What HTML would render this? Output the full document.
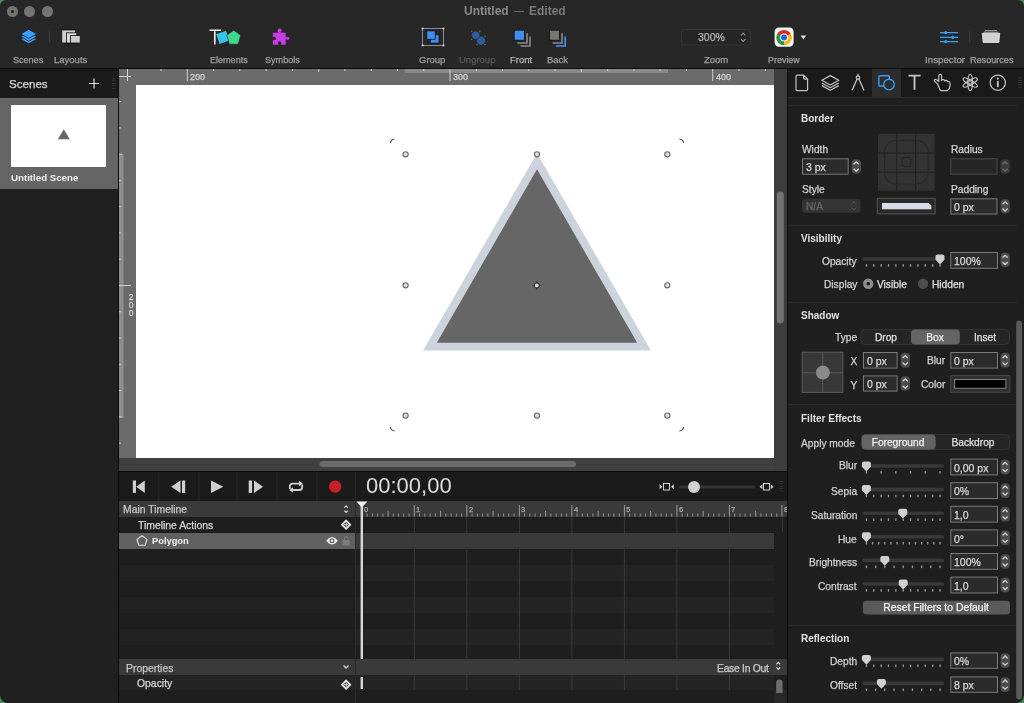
<!DOCTYPE html>
<html><head><meta charset="utf-8">
<style>
*{margin:0;padding:0;box-sizing:border-box}
html,body{width:1024px;height:703px;overflow:hidden;background:#272727;font-family:"Liberation Sans",sans-serif;position:relative}
.a{position:absolute}
.t{position:absolute;white-space:nowrap;line-height:1;-webkit-text-stroke:0.25px currentColor}
.t[style*="bold"]{-webkit-text-stroke:0}
.t{will-change:transform}
svg{position:absolute;overflow:visible}
</style></head><body>
<!-- ===== TOOLBAR ===== -->
<div class="a" style="left:0;top:0;width:1024px;height:68px;background:#272727"></div>
<div class="a" style="left:7px;top:6px;width:11px;height:11px;border-radius:50%;background:#747474"></div>
<div class="a" style="left:11px;top:10px;width:3px;height:3px;border-radius:50%;background:#1d1d1d"></div>
<div class="a" style="left:24px;top:6px;width:11px;height:11px;border-radius:50%;background:#747474"></div>
<div class="a" style="left:42px;top:6px;width:11px;height:11px;border-radius:50%;background:#747474"></div>
<div class="t" style="left:464px;top:5px;font-size:12px;font-weight:bold;color:#8a8a8a">Untitled</div>
<div class="a" style="left:514px;top:11px;width:10px;height:1px;background:#6a6a6a"></div>
<div class="t" style="left:529px;top:5px;font-size:12px;font-weight:bold;color:#7a7a7a">Edited</div>


<!-- toolbar icons -->
<svg style="left:0;top:0" width="1024" height="68" viewBox="0 0 1024 68">
 <!-- scenes layers -->
 <path d="M28.8 34.8 L36.9 39.3 L28.8 43.8 L20.7 39.3 Z" fill="#3aa0ff" stroke="#1b1b1b" stroke-width="0.8" stroke-linejoin="round"/>
 <path d="M28.8 32.2 L36.9 36.7 L28.8 41.2 L20.7 36.7 Z" fill="#3aa0ff" stroke="#1b1b1b" stroke-width="0.8" stroke-linejoin="round"/>
 <path d="M28.8 29.4 L36.9 33.9 L28.8 38.4 L20.7 33.9 Z" fill="#3aa0ff" stroke="#1b1b1b" stroke-width="0.8" stroke-linejoin="round"/>
 <rect x="49" y="30.5" width="1" height="12" fill="#3a3a3a"/>
 <!-- layouts -->
 <rect x="61.8" y="30" width="13.6" height="13" fill="#cfcfcf" stroke="#111" stroke-width="0.8"/>
 <rect x="66.4" y="32.8" width="10.4" height="10.2" fill="#d6d6d6" stroke="#111" stroke-width="0.8"/>
 <rect x="70.6" y="35.6" width="9.6" height="7.4" fill="#cdcdcd" stroke="#111" stroke-width="0.8"/>
 <!-- elements -->
 <path d="M209.5 30.3 H221 M214.8 30.3 V44.5" stroke="#f2f2f2" stroke-width="1.6" fill="none"/>
 <g transform="rotate(-20 222.8 37.3)"><rect x="217.6" y="32.2" width="10.4" height="10.4" fill="#35c3ea"/></g>
 <path d="M233.8 30.3 L240.6 35.2 L238.2 44.2 L229.3 44.2 L226.8 35.2 Z" fill="#3fd88c" stroke="#272727" stroke-width="0.6"/>
 <!-- symbols puzzle -->
 <rect x="272.85" y="32.7" width="12.8" height="12" fill="#c83ce8"/>
 <rect x="278.7" y="31" width="1.8" height="2.5" fill="#c83ce8"/>
 <circle cx="279.6" cy="30.6" r="2" fill="#c83ce8"/>
 <rect x="285" y="37.4" width="2.2" height="1.6" fill="#c83ce8"/>
 <circle cx="287.8" cy="38.3" r="1.6" fill="#c83ce8"/>
 <circle cx="274.3" cy="38.4" r="1.7" fill="#272727"/>
 <rect x="272" y="37.4" width="2.4" height="2" fill="#272727"/>
 <circle cx="279.7" cy="43" r="1.7" fill="#272727"/>
 <rect x="278.7" y="43" width="2" height="2" fill="#272727"/>
 <!-- group -->
 <rect x="422.5" y="28.5" width="21" height="17" fill="none" stroke="#8c8c8c" stroke-width="1"/>
 <circle cx="422.6" cy="28.6" r="1.1" fill="#d0d0d0"/><circle cx="443.4" cy="28.6" r="1.1" fill="#d0d0d0"/>
 <circle cx="422.6" cy="45.4" r="1.1" fill="#d0d0d0"/><circle cx="443.4" cy="45.4" r="1.1" fill="#d0d0d0"/>
 <rect x="430.3" y="34.8" width="8.7" height="8.3" fill="#3d8ff6" stroke="#111" stroke-width="0.8"/>
 <rect x="426.8" y="30.9" width="8.4" height="8.4" fill="#3d8ff6" stroke="#111" stroke-width="0.8"/>
 <!-- ungroup -->
 <circle cx="481" cy="40.6" r="4.2" fill="#2d5c9e"/>
 <circle cx="475.8" cy="35.2" r="4.2" fill="#2d5c9e" stroke="#272727" stroke-width="0.7"/>
 <g fill="#6a6a6a"><circle cx="471.6" cy="31.2" r="0.8"/><circle cx="479.8" cy="31.2" r="0.8"/><circle cx="471.6" cy="39.2" r="0.8"/><circle cx="479.6" cy="39.2" r="0.8"/><circle cx="485" cy="36.2" r="0.8"/><circle cx="477" cy="44.6" r="0.8"/><circle cx="485" cy="44.6" r="0.8"/></g>
 <!-- front -->
 <path d="M520.6 46 H530 V36.4" fill="none" stroke="#8a8a8a" stroke-width="1.6"/>
 <path d="M517.4 43 H527 V33.3" fill="none" stroke="#8a8a8a" stroke-width="1.6"/>
 <rect x="514.2" y="30.2" width="10.2" height="10" fill="#3d8ff6" stroke="#111" stroke-width="0.8"/>
 <!-- back -->
 <path d="M555.8 46 H565.2 V36.4" fill="none" stroke="#3d9bff" stroke-width="1.6"/>
 <path d="M552.6 43 H562 V33.3" fill="none" stroke="#8a8a8a" stroke-width="1.6"/>
 <rect x="549.6" y="30.2" width="10" height="10" fill="#757575" stroke="#111" stroke-width="0.8"/>
 <!-- zoom box -->
 <rect x="681.5" y="29.5" width="69" height="15.5" rx="3" fill="#262626" stroke="#353535" stroke-width="1"/>
 <path d="M741 35.4 L743.2 33.2 L745.4 35.4 M741 39.2 L743.2 41.4 L745.4 39.2" fill="none" stroke="#9a9a9a" stroke-width="1.1"/>
 <!-- chrome -->
 <rect x="774.6" y="27.6" width="19" height="19.2" rx="4.2" fill="#f6f6f6"/>
 <circle cx="784" cy="37.4" r="7.5" fill="#dd2a1e"/>
 <path d="M784 37.4 L777.5 33.65 A7.5 7.5 0 0 0 784 44.9 Z" fill="#1f9a3e"/>
 <path d="M784 37.4 L784 44.9 A7.5 7.5 0 0 0 790.5 33.65 Z" fill="#f9bc14"/>
 <circle cx="784" cy="37.4" r="3.9" fill="#fff"/>
 <circle cx="784" cy="37.4" r="3" fill="#1d63e6"/>
 <path d="M800.6 35.6 H806.2 L803.4 39.6 Z" fill="#dcdcdc"/>
 <!-- inspector -->
 <g stroke="#3aa0ff" stroke-width="1.3"><path d="M940 32.6 H958 M940 37.3 H958 M940 41.6 H958"/></g>
 <g fill="#3aa0ff"><circle cx="945.7" cy="32.6" r="1.6"/><circle cx="952.7" cy="37.3" r="1.6"/><circle cx="945.7" cy="41.6" r="1.6"/></g>
 <rect x="969" y="31" width="1" height="11.5" fill="#383838"/>
 <!-- resources tray -->
 <path d="M985 30.6 H997 M983.8 32.2 H998.2" stroke="#a8a8a8" stroke-width="1"/>
 <path d="M981.8 33.6 Q982 32.8 983 32.8 H999 Q1000 32.8 1000.2 33.6 L999.4 42 Q999.2 43 998.2 43 H983.8 Q982.8 43 982.6 42 Z" fill="#d2d2d2"/>
</svg>

<!-- toolbar labels -->
<div class="t" style="left:12.5px;top:55.64px;font-size:9.05px;color:#a0a0a0">Scenes</div>
<div class="t" style="left:54px;top:55.26px;font-size:9.5px;color:#a0a0a0">Layouts</div>
<div class="t" style="left:210px;top:55.64px;font-size:9.05px;color:#a0a0a0">Elements</div>
<div class="t" style="left:265px;top:55.60px;font-size:9.1px;color:#a0a0a0">Symbols</div>
<div class="t" style="left:419px;top:55.26px;font-size:9.5px;color:#a0a0a0">Group</div>
<div class="t" style="left:459px;top:55.26px;font-size:9.5px;color:#5a5a5a">Ungroup</div>
<div class="t" style="left:510px;top:55.26px;font-size:9.5px;color:#b4b4b4">Front</div>
<div class="t" style="left:547px;top:55.26px;font-size:9.5px;color:#a0a0a0">Back</div>
<div class="t" style="left:704px;top:55.26px;font-size:9.5px;color:#a0a0a0">Zoom</div>
<div class="t" style="left:698px;top:31.5px;font-size:10.5px;color:#b4b4b4">300%</div>
<div class="t" style="left:768px;top:55.72px;font-size:8.95px;color:#a0a0a0">Preview</div>
<div class="t" style="left:924.5px;top:55.05px;font-size:9.75px;color:#a0a0a0">Inspector</div>
<div class="t" style="left:970px;top:55.60px;font-size:9.1px;color:#a0a0a0">Resources</div>

<div class="a" style="left:0;top:68px;width:1024px;height:1px;background:#0c0c0c"></div>

<!-- ===== LEFT SIDEBAR ===== -->
<div class="a" style="left:0;top:69px;width:118px;height:634px;background:#202020"></div>
<div class="a" style="left:0;top:69px;width:118px;height:29px;background:#1b1b1b"></div>
<div class="t" style="left:9px;top:78.3px;font-size:11.6px;color:#d8d8d8">Scenes</div>
<div class="a" style="left:0;top:98px;width:118px;height:91px;background:#656565"></div>
<div class="a" style="left:11px;top:105px;width:95px;height:62px;background:#fff"></div>
<div class="t" style="left:11px;top:173px;font-size:9.7px;font-weight:bold;color:#f0f0f0">Untitled Scene</div>
<div class="a" style="left:118px;top:69px;width:1px;height:634px;background:#0c0c0c"></div>

<!-- ===== CANVAS ===== -->
<div class="a" style="left:119px;top:69px;width:655px;height:389px;background:#6b6b6b"></div>
<div class="a" style="left:136px;top:85px;width:638px;height:373px;background:#fff"></div>
<div class="a" style="left:774px;top:69px;width:13px;height:402px;background:#3d3d3d"></div>
<div class="a" style="left:119px;top:458px;width:655px;height:13px;background:#404040"></div>
<div class="a" style="left:119px;top:471px;width:668px;height:1px;background:#0c0c0c"></div>


<!-- canvas rulers -->
<svg style="left:0;top:0" width="1024" height="703" viewBox="0 0 1024 703">
 <rect x="404.8" y="69" width="263.2" height="4" fill="#8a8a8a"/>
 <rect x="119" y="154" width="4.6" height="264" fill="#8e8e8e"/>
 
 <rect x="160.53" y="69" width="1" height="2" fill="#cfcfcf"/><rect x="186.80" y="69" width="1" height="12" fill="#cfcfcf"/><rect x="213.07" y="69" width="1" height="2" fill="#cfcfcf"/><rect x="239.34" y="69" width="1" height="2" fill="#cfcfcf"/><rect x="265.61" y="69" width="1" height="2" fill="#cfcfcf"/><rect x="291.88" y="69" width="1" height="2" fill="#cfcfcf"/><rect x="318.15" y="69" width="1" height="3" fill="#cfcfcf"/><rect x="344.42" y="69" width="1" height="2" fill="#cfcfcf"/><rect x="370.69" y="69" width="1" height="2" fill="#cfcfcf"/><rect x="396.96" y="69" width="1" height="2" fill="#cfcfcf"/><rect x="423.23" y="69" width="1" height="2" fill="#cfcfcf"/><rect x="449.50" y="69" width="1" height="12" fill="#cfcfcf"/><rect x="475.77" y="69" width="1" height="2" fill="#cfcfcf"/><rect x="502.04" y="69" width="1" height="2" fill="#cfcfcf"/><rect x="528.31" y="69" width="1" height="2" fill="#cfcfcf"/><rect x="554.58" y="69" width="1" height="2" fill="#cfcfcf"/><rect x="580.85" y="69" width="1" height="3" fill="#cfcfcf"/><rect x="607.12" y="69" width="1" height="2" fill="#cfcfcf"/><rect x="633.39" y="69" width="1" height="2" fill="#cfcfcf"/><rect x="659.66" y="69" width="1" height="2" fill="#cfcfcf"/><rect x="685.93" y="69" width="1" height="2" fill="#cfcfcf"/><rect x="712.20" y="69" width="1" height="12" fill="#cfcfcf"/><rect x="738.47" y="69" width="1" height="2" fill="#cfcfcf"/><rect x="764.74" y="69" width="1" height="2" fill="#cfcfcf"/><rect x="119" y="101.11" width="2" height="1" fill="#cfcfcf"/><rect x="119" y="127.38" width="2" height="1" fill="#cfcfcf"/><rect x="119" y="153.65" width="3" height="1" fill="#cfcfcf"/><rect x="119" y="179.92" width="2" height="1" fill="#cfcfcf"/><rect x="119" y="206.19" width="2" height="1" fill="#cfcfcf"/><rect x="119" y="232.46" width="2" height="1" fill="#cfcfcf"/><rect x="119" y="258.73" width="2" height="1" fill="#cfcfcf"/><rect x="119" y="285.00" width="12" height="1" fill="#cfcfcf"/><rect x="119" y="311.27" width="2" height="1" fill="#cfcfcf"/><rect x="119" y="337.54" width="2" height="1" fill="#cfcfcf"/><rect x="119" y="363.81" width="2" height="1" fill="#cfcfcf"/><rect x="119" y="390.08" width="2" height="1" fill="#cfcfcf"/><rect x="119" y="416.35" width="3" height="1" fill="#cfcfcf"/><rect x="119" y="442.62" width="2" height="1" fill="#cfcfcf"/>
 <path d="M119 76.5 H131 M127.5 69 V81" stroke="#d8d8d8" stroke-width="1"/>
 <rect x="319.5" y="461" width="256.5" height="6" rx="3" fill="#6c6c6c"/>
 <rect x="776.8" y="191.5" width="7" height="132" rx="3.5" fill="#727272"/>
</svg>
<div class="t" style="left:190px;top:73px;font-size:9px;color:#d8d8d8">200</div>
<div class="t" style="left:453px;top:73px;font-size:9px;color:#d8d8d8">300</div>
<div class="t" style="left:716px;top:73px;font-size:9px;color:#d8d8d8">400</div>


<svg style="left:0;top:0" width="1024" height="703" viewBox="0 0 1024 703">
 
 <!-- sidebar header + and handle -->
 <path d="M89 83.5 H99 M94 78.5 V88.5" stroke="#e0e0e0" stroke-width="1.2"/>
 <g fill="#3a3a3a"><rect x="112" y="78" width="3.5" height="0.8"/><rect x="112" y="80.5" width="3.5" height="0.8"/><rect x="112" y="83" width="3.5" height="0.8"/><rect x="112" y="85.5" width="3.5" height="0.8"/><rect x="112" y="88" width="3.5" height="0.8"/></g>
 <!-- thumbnail triangle -->
 <path d="M63.8 129.3 L69.8 139.3 L57.8 139.3 Z" fill="#666"/>
 <!-- main triangle -->
 <path d="M537 153.2 L650.9 350.6 L423.1 350.6 Z" fill="#cdd3dc"/>
 <path d="M537 169.2 L637.2 342.8 L436.8 342.8 Z" fill="#666666"/>
 <!-- arcs -->
 <g fill="none" stroke="#444" stroke-width="1.2">
  <path d="M390.3 143 A5 5 0 0 1 394.6 139"/>
  <path d="M679.4 139 A5 5 0 0 1 683.7 143"/>
  <path d="M390.3 427 A5 5 0 0 0 394.6 431"/>
  <path d="M679.4 431 A5 5 0 0 0 683.7 427"/>
 </g>
 <!-- handles -->
 <g fill="#dedede" stroke="#666" stroke-width="1.1">
  <circle cx="405.6" cy="154.3" r="2.6"/><circle cx="537" cy="154.3" r="2.6"/><circle cx="667.3" cy="154.3" r="2.6"/>
  <circle cx="405.6" cy="285.3" r="2.6"/><circle cx="667.3" cy="285.3" r="2.6"/>
  <circle cx="405.6" cy="415.6" r="2.6"/><circle cx="537" cy="415.6" r="2.6"/><circle cx="667.3" cy="415.6" r="2.6"/>
 </g>
 <path d="M536.8 280.5 L538.2 284 L541.6 285.4 L538.2 286.8 L536.8 290.3 L535.4 286.8 L532 285.4 L535.4 284 Z" fill="#333"/><circle cx="536.8" cy="285.4" r="2.9" fill="#333"/><circle cx="536.8" cy="285.4" r="1.9" fill="#e4e4e4"/>
</svg>
<div class="t" style="left:127.5px;top:293px;font-size:8.5px;line-height:8px;color:#d8d8d8;width:6px;text-align:center;white-space:normal">2<br>0<br>0</div>


<!-- ===== TIMELINE ===== -->
<div class="a" style="left:119px;top:472px;width:668px;height:29px;background:#1b1b1b"></div>
<svg style="left:0;top:0" width="1024" height="703" viewBox="0 0 1024 703">
 <g fill="#2a2a2a"><rect x="158.3" y="472" width="1" height="29"/><rect x="198.4" y="472" width="1" height="29"/><rect x="236.6" y="472" width="1" height="29"/><rect x="276.6" y="472" width="1" height="29"/><rect x="316.4" y="472" width="1" height="29"/><rect x="354.8" y="472" width="1" height="29"/></g>
 <g fill="#cfcfcf">
  <rect x="132.8" y="480.5" width="3.2" height="12.4"/><path d="M136.2 486.7 L144.8 480.5 V492.9 Z"/>
  <path d="M171.2 486.7 L180.5 480.5 V492.9 Z"/><rect x="182" y="480.5" width="3.2" height="12.4"/>
  <path d="M211 480.5 L223.3 486.7 L211 492.9 Z"/>
  <rect x="248.7" y="480.5" width="3.4" height="12.4"/><path d="M254 480.5 L263 486.7 L254 492.9 Z"/>
 </g>
 <g fill="none" stroke="#cfcfcf" stroke-width="1.8">
  <path d="M289.8 489 V486.5 Q289.8 483.6 292.7 483.6 H300"/>
  <path d="M302.2 484.6 V487 Q302.2 490 299.3 490 H292"/>
 </g>
 <path d="M299 480.8 L302.8 483.6 L299 486.4 Z" fill="#cfcfcf"/>
 <path d="M293 487.2 L289.2 490 L293 492.8 Z" fill="#cfcfcf"/>
 <circle cx="335.2" cy="486.6" r="6.2" fill="#c71f27"/>
 <!-- zoom slider -->
 <rect x="678.6" y="485.6" width="76.4" height="3" rx="1.5" fill="#353535"/>
 <circle cx="694" cy="487" r="6" fill="#d2d2d2"/>
 <g fill="none" stroke="#d0d0d0" stroke-width="1"><rect x="663.5" y="483.5" width="6" height="6.5"/><rect x="763.5" y="483.5" width="6" height="6.5"/></g>
 <g fill="#d0d0d0"><path d="M659.6 484.3 L662.4 486.8 L659.6 489.3Z"/><path d="M673.8 484.3 L671 486.8 L673.8 489.3Z"/><path d="M762.4 484.3 L759.6 486.8 L762.4 489.3Z"/><path d="M770.8 484.3 L773.6 486.8 L770.8 489.3Z"/></g>
 <g fill="#3a3a3a"><rect x="779.5" y="481" width="3.5" height="0.8"/><rect x="779.5" y="483.4" width="3.5" height="0.8"/><rect x="779.5" y="485.8" width="3.5" height="0.8"/><rect x="779.5" y="488.2" width="3.5" height="0.8"/><rect x="779.5" y="490.6" width="3.5" height="0.8"/></g>

 <!-- rows -->
 <rect x="119" y="501" width="668" height="16" fill="#3a3a3a"/>
 <rect x="119" y="517" width="668" height="142" fill="#1e1e1e"/>
 <rect x="119" y="517" width="236" height="16" fill="#1e1e1e"/>
 <rect x="356" y="517" width="418" height="16" fill="#1e1e1e"/>
 <rect x="119" y="533" width="236" height="16" fill="#606060"/>
 <rect x="356" y="533" width="418" height="16" fill="#3a3a3a"/>
 <rect x="119" y="565" width="655" height="16" fill="#242424"/>
 <rect x="119" y="597" width="655" height="16" fill="#242424"/>
 <rect x="119" y="629" width="655" height="16" fill="#242424"/>
 <rect x="119" y="565" width="236" height="16" fill="#212121"/><rect x="119" y="597" width="236" height="16" fill="#212121"/><rect x="119" y="629" width="236" height="16" fill="#212121"/><rect x="119" y="675" width="236" height="15" fill="#212121"/>
 <rect x="119" y="659" width="668" height="16" fill="#3a3a3a"/>
 <rect x="119" y="675" width="668" height="28" fill="#1e1e1e"/>
 <rect x="119" y="675" width="655" height="15" fill="#242424"/>
 <rect x="355" y="501" width="1" height="202" fill="#2b2b2b"/>
 
 
 <!--grid--><rect x="413.82" y="517" width="1" height="142" fill="#3a3a3a"/><rect x="413.82" y="675" width="1" height="15" fill="#3a3a3a"/><rect x="466.34" y="517" width="1" height="142" fill="#3a3a3a"/><rect x="466.34" y="675" width="1" height="15" fill="#3a3a3a"/><rect x="518.86" y="517" width="1" height="142" fill="#3a3a3a"/><rect x="518.86" y="675" width="1" height="15" fill="#3a3a3a"/><rect x="571.38" y="517" width="1" height="142" fill="#3a3a3a"/><rect x="571.38" y="675" width="1" height="15" fill="#3a3a3a"/><rect x="623.90" y="517" width="1" height="142" fill="#3a3a3a"/><rect x="623.90" y="675" width="1" height="15" fill="#3a3a3a"/><rect x="676.42" y="517" width="1" height="142" fill="#3a3a3a"/><rect x="676.42" y="675" width="1" height="15" fill="#3a3a3a"/><rect x="728.94" y="517" width="1" height="142" fill="#3a3a3a"/><rect x="728.94" y="675" width="1" height="15" fill="#3a3a3a"/>
 <!--ticks--><rect x="361.30" y="505" width="1" height="11.5" fill="#9a9a9a"/><rect x="366.55" y="513.6" width="1" height="2.9" fill="#9a9a9a"/><rect x="371.80" y="513.6" width="1" height="2.9" fill="#9a9a9a"/><rect x="377.06" y="513.6" width="1" height="2.9" fill="#9a9a9a"/><rect x="382.31" y="513.6" width="1" height="2.9" fill="#9a9a9a"/><rect x="387.56" y="510.8" width="1" height="5.7" fill="#9a9a9a"/><rect x="392.81" y="513.6" width="1" height="2.9" fill="#9a9a9a"/><rect x="398.06" y="513.6" width="1" height="2.9" fill="#9a9a9a"/><rect x="403.32" y="513.6" width="1" height="2.9" fill="#9a9a9a"/><rect x="408.57" y="513.6" width="1" height="2.9" fill="#9a9a9a"/><rect x="413.82" y="505" width="1" height="11.5" fill="#9a9a9a"/><rect x="419.07" y="513.6" width="1" height="2.9" fill="#9a9a9a"/><rect x="424.32" y="513.6" width="1" height="2.9" fill="#9a9a9a"/><rect x="429.58" y="513.6" width="1" height="2.9" fill="#9a9a9a"/><rect x="434.83" y="513.6" width="1" height="2.9" fill="#9a9a9a"/><rect x="440.08" y="510.8" width="1" height="5.7" fill="#9a9a9a"/><rect x="445.33" y="513.6" width="1" height="2.9" fill="#9a9a9a"/><rect x="450.58" y="513.6" width="1" height="2.9" fill="#9a9a9a"/><rect x="455.84" y="513.6" width="1" height="2.9" fill="#9a9a9a"/><rect x="461.09" y="513.6" width="1" height="2.9" fill="#9a9a9a"/><rect x="466.34" y="505" width="1" height="11.5" fill="#9a9a9a"/><rect x="471.59" y="513.6" width="1" height="2.9" fill="#9a9a9a"/><rect x="476.84" y="513.6" width="1" height="2.9" fill="#9a9a9a"/><rect x="482.10" y="513.6" width="1" height="2.9" fill="#9a9a9a"/><rect x="487.35" y="513.6" width="1" height="2.9" fill="#9a9a9a"/><rect x="492.60" y="510.8" width="1" height="5.7" fill="#9a9a9a"/><rect x="497.85" y="513.6" width="1" height="2.9" fill="#9a9a9a"/><rect x="503.10" y="513.6" width="1" height="2.9" fill="#9a9a9a"/><rect x="508.36" y="513.6" width="1" height="2.9" fill="#9a9a9a"/><rect x="513.61" y="513.6" width="1" height="2.9" fill="#9a9a9a"/><rect x="518.86" y="505" width="1" height="11.5" fill="#9a9a9a"/><rect x="524.11" y="513.6" width="1" height="2.9" fill="#9a9a9a"/><rect x="529.36" y="513.6" width="1" height="2.9" fill="#9a9a9a"/><rect x="534.62" y="513.6" width="1" height="2.9" fill="#9a9a9a"/><rect x="539.87" y="513.6" width="1" height="2.9" fill="#9a9a9a"/><rect x="545.12" y="510.8" width="1" height="5.7" fill="#9a9a9a"/><rect x="550.37" y="513.6" width="1" height="2.9" fill="#9a9a9a"/><rect x="555.62" y="513.6" width="1" height="2.9" fill="#9a9a9a"/><rect x="560.88" y="513.6" width="1" height="2.9" fill="#9a9a9a"/><rect x="566.13" y="513.6" width="1" height="2.9" fill="#9a9a9a"/><rect x="571.38" y="505" width="1" height="11.5" fill="#9a9a9a"/><rect x="576.63" y="513.6" width="1" height="2.9" fill="#9a9a9a"/><rect x="581.88" y="513.6" width="1" height="2.9" fill="#9a9a9a"/><rect x="587.14" y="513.6" width="1" height="2.9" fill="#9a9a9a"/><rect x="592.39" y="513.6" width="1" height="2.9" fill="#9a9a9a"/><rect x="597.64" y="510.8" width="1" height="5.7" fill="#9a9a9a"/><rect x="602.89" y="513.6" width="1" height="2.9" fill="#9a9a9a"/><rect x="608.14" y="513.6" width="1" height="2.9" fill="#9a9a9a"/><rect x="613.40" y="513.6" width="1" height="2.9" fill="#9a9a9a"/><rect x="618.65" y="513.6" width="1" height="2.9" fill="#9a9a9a"/><rect x="623.90" y="505" width="1" height="11.5" fill="#9a9a9a"/><rect x="629.15" y="513.6" width="1" height="2.9" fill="#9a9a9a"/><rect x="634.40" y="513.6" width="1" height="2.9" fill="#9a9a9a"/><rect x="639.66" y="513.6" width="1" height="2.9" fill="#9a9a9a"/><rect x="644.91" y="513.6" width="1" height="2.9" fill="#9a9a9a"/><rect x="650.16" y="510.8" width="1" height="5.7" fill="#9a9a9a"/><rect x="655.41" y="513.6" width="1" height="2.9" fill="#9a9a9a"/><rect x="660.66" y="513.6" width="1" height="2.9" fill="#9a9a9a"/><rect x="665.92" y="513.6" width="1" height="2.9" fill="#9a9a9a"/><rect x="671.17" y="513.6" width="1" height="2.9" fill="#9a9a9a"/><rect x="676.42" y="505" width="1" height="11.5" fill="#9a9a9a"/><rect x="681.67" y="513.6" width="1" height="2.9" fill="#9a9a9a"/><rect x="686.92" y="513.6" width="1" height="2.9" fill="#9a9a9a"/><rect x="692.18" y="513.6" width="1" height="2.9" fill="#9a9a9a"/><rect x="697.43" y="513.6" width="1" height="2.9" fill="#9a9a9a"/><rect x="702.68" y="510.8" width="1" height="5.7" fill="#9a9a9a"/><rect x="707.93" y="513.6" width="1" height="2.9" fill="#9a9a9a"/><rect x="713.18" y="513.6" width="1" height="2.9" fill="#9a9a9a"/><rect x="718.44" y="513.6" width="1" height="2.9" fill="#9a9a9a"/><rect x="723.69" y="513.6" width="1" height="2.9" fill="#9a9a9a"/><rect x="728.94" y="505" width="1" height="11.5" fill="#9a9a9a"/><rect x="734.19" y="513.6" width="1" height="2.9" fill="#9a9a9a"/><rect x="739.44" y="513.6" width="1" height="2.9" fill="#9a9a9a"/><rect x="744.70" y="513.6" width="1" height="2.9" fill="#9a9a9a"/><rect x="749.95" y="513.6" width="1" height="2.9" fill="#9a9a9a"/><rect x="755.20" y="510.8" width="1" height="5.7" fill="#9a9a9a"/><rect x="760.45" y="513.6" width="1" height="2.9" fill="#9a9a9a"/><rect x="765.70" y="513.6" width="1" height="2.9" fill="#9a9a9a"/><rect x="770.96" y="513.6" width="1" height="2.9" fill="#9a9a9a"/><rect x="776.21" y="513.6" width="1" height="2.9" fill="#9a9a9a"/><rect x="781.46" y="505" width="1" height="11.5" fill="#9a9a9a"/>
 <!-- playhead -->
 <rect x="360.6" y="505" width="2.4" height="154" fill="#d8d8d8"/>
 <rect x="360.6" y="677" width="2.4" height="12" fill="#d8d8d8"/>
 <path d="M356.3 501.5 H367.4 L361.8 507.5 Z" fill="#f0f0f0"/>
 <!-- icons left panel -->
 <path d="M344.3 507.6 L346.1 505.8 L347.9 507.6 M344.3 510.6 L346.1 512.4 L347.9 510.6" fill="none" stroke="#d0d0d0" stroke-width="1.3"/>
 <path d="M346.1 520.6 L350.2 524.7 L346.1 528.8 L342 524.7 Z" fill="none" stroke="#e6e6e6" stroke-width="1.8"/>
 <path d="M346.1 522.6 V526.8 M344 524.7 H348.2" stroke="#e6e6e6" stroke-width="1"/>
 <path d="M346.1 680.6 L350.2 684.7 L346.1 688.8 L342 684.7 Z" fill="none" stroke="#e6e6e6" stroke-width="1.8"/>
 <path d="M346.1 682.6 V686.8 M344 684.7 H348.2" stroke="#e6e6e6" stroke-width="1"/>
 <path d="M343.6 665.4 L346.1 668 L348.6 665.4" fill="none" stroke="#d0d0d0" stroke-width="1.4"/>
 <path d="M142 535.8 L147 539.4 L145.1 545.3 H138.9 L137 539.4 Z" fill="none" stroke="#e6e6e6" stroke-width="1.1"/>
 <path d="M326.2 540.8 Q332 533.4 337.9 540.8 Q332 548.2 326.2 540.8 Z" fill="#f2f2f2"/>
 <circle cx="332" cy="540.8" r="2.5" fill="#606060"/><circle cx="332" cy="540.8" r="1.2" fill="#f2f2f2"/>
 <rect x="342.6" y="540" width="7" height="5.4" fill="#7c7c7c"/>
 <path d="M344.2 540 V537.8 Q346.1 535.3 348 537.8" fill="none" stroke="#7c7c7c" stroke-width="1"/>
 <!-- Ease in out stepper -->
 <path d="M776.4 664.4 L778.3 662.5 L780.2 664.4 M776.4 667.4 L778.3 669.3 L780.2 667.4" fill="none" stroke="#d0d0d0" stroke-width="1.3"/>
 <rect x="774" y="690" width="13" height="13" fill="#282828"/><path d="M776.2 693 V682.6 Q776.2 679.4 779.4 679.4 Q782.6 679.4 782.6 682.6 V693 Z" fill="#6e6e6e"/><rect x="781.9" y="517" width="1" height="15" fill="#3a3a3a"/>
</svg>
<!--labels--><div class="t" style="left:363.8px;top:505.6px;font-size:7.6px;color:#a8a8a8">0</div><div class="t" style="left:416.3px;top:505.6px;font-size:7.6px;color:#a8a8a8">1</div><div class="t" style="left:468.8px;top:505.6px;font-size:7.6px;color:#a8a8a8">2</div><div class="t" style="left:521.4px;top:505.6px;font-size:7.6px;color:#a8a8a8">3</div><div class="t" style="left:573.9px;top:505.6px;font-size:7.6px;color:#a8a8a8">4</div><div class="t" style="left:626.4px;top:505.6px;font-size:7.6px;color:#a8a8a8">5</div><div class="t" style="left:678.9px;top:505.6px;font-size:7.6px;color:#a8a8a8">6</div><div class="t" style="left:731.4px;top:505.6px;font-size:7.6px;color:#a8a8a8">7</div><div class="t" style="left:784.0px;top:505.6px;font-size:7.6px;color:#a8a8a8">8</div>

<div class="t" style="left:366px;top:474.7px;font-size:22px;color:#dcdcdc;-webkit-text-stroke:0">00:00,00</div>
<div class="t" style="left:123px;top:505px;font-size:10.4px;color:#c8c8c8">Main Timeline</div>
<div class="t" style="left:138px;top:520.5px;font-size:10.4px;color:#d8d8d8">Timeline Actions</div>
<div class="t" style="left:152px;top:537.3px;font-size:9.3px;font-weight:bold;color:#f0f0f0">Polygon</div>
<div class="t" style="left:126px;top:664px;font-size:10.4px;color:#c8c8c8">Properties</div>
<div class="t" style="left:137px;top:679px;font-size:10.4px;color:#d8d8d8">Opacity</div>
<div class="t" style="left:717px;top:663.8px;font-size:10.4px;letter-spacing:-0.3px;color:#cccccc">Ease In Out</div>


<!-- ===== INSPECTOR ===== -->
<div class="a" style="left:787px;top:69px;width:1px;height:634px;background:#0c0c0c"></div>
<div class="a" style="left:788px;top:69px;width:236px;height:634px;background:#1f1f1f"></div>
<svg style="left:0;top:0" width="1024" height="703" viewBox="0 0 1024 703">
<rect x="788" y="69" width="236" height="28" fill="#1a1a1a"/>
<rect x="872" y="69" width="29" height="28" fill="#2d2d2d"/>
<rect x="788" y="97" width="236" height="1" fill="#2a2a2a"/>
<rect x="788" y="105.1" width="229" height="1" fill="#2d2d2d"/>
<path d="M796 76.3 Q796 75.2 797.1 75.2 H803.6 L807.6 79.2 V89.6 Q807.6 90.7 806.5 90.7 H797.1 Q796 90.7 796 89.6 Z M803.6 75.2 V78 Q803.6 79.2 804.8 79.2 H807.6" fill="none" stroke="#c4c4c4" stroke-width="1.2" stroke-linejoin="round"/>
<path d="M830.3 75.6 L838.8 80.3 L830.3 85 L821.8 80.3 Z" fill="none" stroke="#c4c4c4" stroke-width="1.2" stroke-linejoin="round"/>
<path d="M821.8 83 L830.3 87.7 L838.8 83 M821.8 85.6 L830.3 90.2 L838.8 85.6" fill="none" stroke="#c4c4c4" stroke-width="1.2" stroke-linejoin="round"/>
<circle cx="858" cy="77.6" r="1.8" fill="none" stroke="#c4c4c4" stroke-width="1.2"/>
<path d="M858 74.2 V75.8 M857 79.2 L852.3 89.8 M859 79.2 L863.7 89.8" fill="none" stroke="#c4c4c4" stroke-width="1.3" stroke-linecap="round"/>
<rect x="878.9" y="75.7" width="10.4" height="10.3" rx="0.8" fill="none" stroke="#3a9df2" stroke-width="1.4"/>
<circle cx="889" cy="84.6" r="5.3" fill="#2d2d2d" stroke="#3a9df2" stroke-width="1.4"/>
<path d="M908.5 75.6 H920.6 M914.5 75.6 V89.8" fill="none" stroke="#c4c4c4" stroke-width="1.9"/>
<path d="M937.6 84.2 L935.2 81.8 Q933.6 80.6 934.6 79.6 Q935.6 78.8 937 80 L938.8 81.6 V75.8 Q938.8 74.4 940.2 74.4 Q941.6 74.4 941.6 75.8 V80.6 Q942.2 79.2 943.6 79.6 Q944.6 80 944.6 81 Q945.4 80 946.6 80.4 Q947.4 80.8 947.4 81.8 Q948.4 81.2 949.4 81.8 Q950 82.4 950 83.6 V86 Q950 89 947.4 90.6 H940.4 Z" fill="none" stroke="#c4c4c4" stroke-width="1.2" stroke-linejoin="round"/>
<g fill="none" stroke="#c4c4c4" stroke-width="1.2"><ellipse cx="970.2" cy="82.5" rx="8" ry="2.4" transform="rotate(90 970.2 82.5)"/><ellipse cx="970.2" cy="82.5" rx="8" ry="2.4" transform="rotate(30 970.2 82.5)"/><ellipse cx="970.2" cy="82.5" rx="8" ry="2.4" transform="rotate(-30 970.2 82.5)"/></g><circle cx="970.2" cy="82.5" r="1.5" fill="none" stroke="#c4c4c4" stroke-width="1"/>
<circle cx="997.8" cy="82.7" r="7.6" fill="none" stroke="#c4c4c4" stroke-width="1.2"/><circle cx="997.8" cy="78.6" r="1.1" fill="#c4c4c4"/><rect x="996.9" y="80.9" width="1.8" height="6.2" fill="#c4c4c4"/>
<rect x="1018" y="77.5" width="4" height="0.8" fill="#3a3a3a"/>
<rect x="1018" y="79.8" width="4" height="0.8" fill="#3a3a3a"/>
<rect x="1018" y="82.1" width="4" height="0.8" fill="#3a3a3a"/>
<rect x="1018" y="84.4" width="4" height="0.8" fill="#3a3a3a"/>
<rect x="1018" y="86.7" width="4" height="0.8" fill="#3a3a3a"/>
<rect x="802.5" y="158.8" width="45.7" height="15.4" fill="#2b2b2b" stroke="#7a7a7a" stroke-width="1"/>
<rect x="851.6" y="159.2" width="9.3" height="14.6" rx="4" fill="#4c4c4c"/>
<path d="M853.6 164.3 L856.2 161.9 L858.8 164.3 M853.6 168.7 L856.2 171.1 L858.8 168.7" fill="none" stroke="#d0d0d0" stroke-width="1.35"/>
<rect x="802" y="198.7" width="58.5" height="14" rx="3.5" fill="#343434"/>
<path d="M852 203.6 L854 201.6 L856 203.6 M852 207.8 L854 209.8 L856 207.8" fill="none" stroke="#5e5e5e" stroke-width="1"/>
<rect x="878" y="133.8" width="56.7" height="56.9" fill="#333333"/>
<g fill="#242424"><rect x="896" y="133.8" width="1.3" height="56.9"/><rect x="915" y="133.8" width="1.3" height="56.9"/><rect x="878" y="152.4" width="56.7" height="1.3"/><rect x="878" y="171.6" width="56.7" height="1.3"/></g>
<rect x="884.5" y="140.3" width="43.7" height="43.9" rx="12" fill="none" stroke="#272727" stroke-width="1.1"/>
<rect x="901.8" y="157.6" width="9" height="9" rx="2.5" fill="none" stroke="#272727" stroke-width="1.1"/>
<rect x="877.3" y="198.3" width="57.8" height="15.5" fill="#2a2a2a" stroke="#555" stroke-width="1"/>
<path d="M882 203 H928.6 L931.4 205.6 V209.2 H882 Z" fill="#d5dce5"/>
<rect x="950.8" y="158.8" width="46.2" height="15.4" fill="#262626" stroke="#4a4a4a" stroke-width="1"/>
<rect x="1000.5" y="159.2" width="9.3" height="14.6" rx="4" fill="#3a3a3a"/>
<path d="M1002.5 164.3 L1005.1 161.9 L1007.7 164.3 M1002.5 168.7 L1005.1 171.1 L1007.7 168.7" fill="none" stroke="#6a6a6a" stroke-width="1.35"/>
<rect x="950.8" y="198.8" width="46.2" height="15.2" fill="#2b2b2b" stroke="#7a7a7a" stroke-width="1"/>
<rect x="1000.5" y="199.2" width="9.3" height="14.4" rx="4" fill="#4c4c4c"/>
<path d="M1002.5 204.2 L1005.1 201.8 L1007.7 204.2 M1002.5 208.6 L1005.1 211.0 L1007.7 208.6" fill="none" stroke="#d0d0d0" stroke-width="1.35"/>
<rect x="788" y="224.7" width="229" height="1" fill="#2d2d2d"/>
<rect x="862.5" y="257.2" width="81.7" height="3.6" rx="1.8" fill="#393939"/>
<rect x="865.8" y="264.1" width="1.3" height="2.6" fill="#9a9a9a"/>
<rect x="873.1" y="264.1" width="1.3" height="2.6" fill="#9a9a9a"/>
<rect x="880.5" y="264.1" width="1.3" height="2.6" fill="#9a9a9a"/>
<rect x="887.8" y="264.1" width="1.3" height="2.6" fill="#9a9a9a"/>
<rect x="895.2" y="264.1" width="1.3" height="2.6" fill="#9a9a9a"/>
<rect x="902.6" y="264.1" width="1.3" height="2.6" fill="#9a9a9a"/>
<rect x="909.9" y="264.1" width="1.3" height="2.6" fill="#9a9a9a"/>
<rect x="917.3" y="264.1" width="1.3" height="2.6" fill="#9a9a9a"/>
<rect x="924.6" y="264.1" width="1.3" height="2.6" fill="#9a9a9a"/>
<rect x="932.0" y="264.1" width="1.3" height="2.6" fill="#9a9a9a"/>
<rect x="939.4" y="264.1" width="1.3" height="2.6" fill="#9a9a9a"/>
<path d="M935.5 256.6 Q935.5 254.5 937.6 254.5 H942.4 Q944.5 254.5 944.5 256.6 V259.7 L940.0 264.4 L935.5 259.7 Z" fill="#d0d0d0"/>
<rect x="950.8" y="252.5" width="46.7" height="15.8" fill="#2b2b2b" stroke="#7a7a7a" stroke-width="1"/>
<rect x="1000.5" y="252.8" width="9.3" height="14.1" rx="4" fill="#4c4c4c"/>
<path d="M1002.5 257.7 L1005.1 255.3 L1007.7 257.7 M1002.5 262.1 L1005.1 264.5 L1007.7 262.1" fill="none" stroke="#d0d0d0" stroke-width="1.35"/>
<circle cx="868.2" cy="283.8" r="5.2" fill="#8e8e8e"/><circle cx="868.2" cy="283.8" r="1.8" fill="#1a1a1a"/>
<circle cx="923" cy="283.8" r="5.2" fill="#4c4c4c"/>
<rect x="788" y="301.9" width="229" height="1" fill="#2d2d2d"/>
<rect x="860.8" y="329.6" width="148.7" height="14.8" rx="4" fill="#262626" stroke="#3a3a3a" stroke-width="0.8"/>
<rect x="911" y="329.6" width="48.8" height="14.8" rx="4" fill="#646464"/>
<rect x="802.2" y="352.2" width="40.6" height="40.2" fill="#383838" stroke="#5c5c5c" stroke-width="1"/>
<g fill="#585858"><rect x="822.2" y="352.2" width="1" height="40.2"/><rect x="802.2" y="372.2" width="40.6" height="1"/></g>
<circle cx="822.9" cy="372.6" r="7" fill="#8a8a8a"/>
<rect x="863.5" y="352.5" width="33.6" height="15.6" fill="#2b2b2b" stroke="#7a7a7a" stroke-width="1"/>
<rect x="900.6" y="352.8" width="9.3" height="15.0" rx="4" fill="#4c4c4c"/>
<path d="M902.6 358.1 L905.2 355.7 L907.8 358.1 M902.6 362.5 L905.2 364.9 L907.8 362.5" fill="none" stroke="#d0d0d0" stroke-width="1.35"/>
<rect x="863.5" y="375.9" width="33.6" height="15.2" fill="#2b2b2b" stroke="#7a7a7a" stroke-width="1"/>
<rect x="900.6" y="376.2" width="9.3" height="14.6" rx="4" fill="#4c4c4c"/>
<path d="M902.6 381.3 L905.2 378.9 L907.8 381.3 M902.6 385.7 L905.2 388.1 L907.8 385.7" fill="none" stroke="#d0d0d0" stroke-width="1.35"/>
<rect x="950.8" y="352.5" width="46.7" height="15.6" fill="#2b2b2b" stroke="#7a7a7a" stroke-width="1"/>
<rect x="1000.5" y="352.8" width="9.3" height="15.0" rx="4" fill="#4c4c4c"/>
<path d="M1002.5 358.1 L1005.1 355.7 L1007.7 358.1 M1002.5 362.5 L1005.1 364.9 L1007.7 362.5" fill="none" stroke="#d0d0d0" stroke-width="1.35"/>
<rect x="950.8" y="375.6" width="59" height="16.6" fill="#2e2e2e" stroke="#4a4a4a" stroke-width="1"/>
<rect x="954.6" y="379.6" width="51.3" height="8.6" fill="#000" stroke="#9a9a9a" stroke-width="0.8"/>
<rect x="788" y="404.2" width="229" height="1" fill="#2d2d2d"/>
<rect x="861.6" y="434.6" width="148" height="15" rx="4" fill="#262626" stroke="#3a3a3a" stroke-width="0.8"/>
<rect x="861.6" y="434.6" width="74" height="15" rx="4" fill="#646464"/>
<rect x="862.5" y="464.2" width="81.7" height="3.6" rx="1.8" fill="#393939"/>
<rect x="865.8" y="471.1" width="1.3" height="2.6" fill="#9a9a9a"/>
<rect x="880.5" y="471.1" width="1.3" height="2.6" fill="#9a9a9a"/>
<rect x="895.2" y="471.1" width="1.3" height="2.6" fill="#9a9a9a"/>
<rect x="909.9" y="471.1" width="1.3" height="2.6" fill="#9a9a9a"/>
<rect x="924.6" y="471.1" width="1.3" height="2.6" fill="#9a9a9a"/>
<rect x="939.4" y="471.1" width="1.3" height="2.6" fill="#9a9a9a"/>
<path d="M861.9 463.6 Q861.9 461.5 864.0 461.5 H868.8 Q870.9 461.5 870.9 463.6 V466.7 L866.4 471.4 L861.9 466.7 Z" fill="#d0d0d0"/>
<rect x="950.8" y="459.1" width="46.7" height="15.8" fill="#2b2b2b" stroke="#7a7a7a" stroke-width="1"/>
<rect x="1000.5" y="459.6" width="9.3" height="14.8" rx="4" fill="#4c4c4c"/>
<path d="M1002.5 464.8 L1005.1 462.4 L1007.7 464.8 M1002.5 469.2 L1005.1 471.6 L1007.7 469.2" fill="none" stroke="#d0d0d0" stroke-width="1.35"/>
<rect x="862.5" y="487.8" width="81.7" height="3.6" rx="1.8" fill="#393939"/>
<rect x="865.8" y="494.7" width="1.3" height="2.6" fill="#9a9a9a"/>
<rect x="873.1" y="494.7" width="1.3" height="2.6" fill="#9a9a9a"/>
<rect x="880.5" y="494.7" width="1.3" height="2.6" fill="#9a9a9a"/>
<rect x="887.8" y="494.7" width="1.3" height="2.6" fill="#9a9a9a"/>
<rect x="895.2" y="494.7" width="1.3" height="2.6" fill="#9a9a9a"/>
<rect x="902.6" y="494.7" width="1.3" height="2.6" fill="#9a9a9a"/>
<rect x="909.9" y="494.7" width="1.3" height="2.6" fill="#9a9a9a"/>
<rect x="917.3" y="494.7" width="1.3" height="2.6" fill="#9a9a9a"/>
<rect x="924.6" y="494.7" width="1.3" height="2.6" fill="#9a9a9a"/>
<rect x="932.0" y="494.7" width="1.3" height="2.6" fill="#9a9a9a"/>
<rect x="939.4" y="494.7" width="1.3" height="2.6" fill="#9a9a9a"/>
<path d="M861.9 487.2 Q861.9 485.1 864.0 485.1 H868.8 Q870.9 485.1 870.9 487.2 V490.3 L866.4 495.0 L861.9 490.3 Z" fill="#d0d0d0"/>
<rect x="950.8" y="482.7" width="46.7" height="15.8" fill="#2b2b2b" stroke="#7a7a7a" stroke-width="1"/>
<rect x="1000.5" y="483.2" width="9.3" height="14.8" rx="4" fill="#4c4c4c"/>
<path d="M1002.5 488.4 L1005.1 486.0 L1007.7 488.4 M1002.5 492.8 L1005.1 495.2 L1007.7 492.8" fill="none" stroke="#d0d0d0" stroke-width="1.35"/>
<rect x="862.5" y="511.4" width="81.7" height="3.6" rx="1.8" fill="#393939"/>
<rect x="865.8" y="518.3" width="1.3" height="2.6" fill="#9a9a9a"/>
<rect x="873.1" y="518.3" width="1.3" height="2.6" fill="#9a9a9a"/>
<rect x="880.5" y="518.3" width="1.3" height="2.6" fill="#9a9a9a"/>
<rect x="887.8" y="518.3" width="1.3" height="2.6" fill="#9a9a9a"/>
<rect x="895.2" y="518.3" width="1.3" height="2.6" fill="#9a9a9a"/>
<rect x="902.6" y="518.3" width="1.3" height="2.6" fill="#9a9a9a"/>
<rect x="909.9" y="518.3" width="1.3" height="2.6" fill="#9a9a9a"/>
<rect x="917.3" y="518.3" width="1.3" height="2.6" fill="#9a9a9a"/>
<rect x="924.6" y="518.3" width="1.3" height="2.6" fill="#9a9a9a"/>
<rect x="932.0" y="518.3" width="1.3" height="2.6" fill="#9a9a9a"/>
<rect x="939.4" y="518.3" width="1.3" height="2.6" fill="#9a9a9a"/>
<path d="M898.3 510.8 Q898.3 508.7 900.4 508.7 H905.2 Q907.3 508.7 907.3 510.8 V513.9 L902.8 518.6 L898.3 513.9 Z" fill="#d0d0d0"/>
<rect x="950.8" y="506.29999999999995" width="46.7" height="15.8" fill="#2b2b2b" stroke="#7a7a7a" stroke-width="1"/>
<rect x="1000.5" y="506.79999999999995" width="9.3" height="14.8" rx="4" fill="#4c4c4c"/>
<path d="M1002.5 512.0 L1005.1 509.6 L1007.7 512.0 M1002.5 516.4 L1005.1 518.8 L1007.7 516.4" fill="none" stroke="#d0d0d0" stroke-width="1.35"/>
<rect x="862.5" y="535.0" width="81.7" height="3.6" rx="1.8" fill="#393939"/>
<rect x="865.8" y="541.9" width="1.3" height="2.6" fill="#9a9a9a"/>
<rect x="871.9" y="541.9" width="1.3" height="2.6" fill="#9a9a9a"/>
<rect x="878.0" y="541.9" width="1.3" height="2.6" fill="#9a9a9a"/>
<rect x="884.1" y="541.9" width="1.3" height="2.6" fill="#9a9a9a"/>
<rect x="890.3" y="541.9" width="1.3" height="2.6" fill="#9a9a9a"/>
<rect x="896.4" y="541.9" width="1.3" height="2.6" fill="#9a9a9a"/>
<rect x="902.6" y="541.9" width="1.3" height="2.6" fill="#9a9a9a"/>
<rect x="908.7" y="541.9" width="1.3" height="2.6" fill="#9a9a9a"/>
<rect x="914.8" y="541.9" width="1.3" height="2.6" fill="#9a9a9a"/>
<rect x="921.0" y="541.9" width="1.3" height="2.6" fill="#9a9a9a"/>
<rect x="927.1" y="541.9" width="1.3" height="2.6" fill="#9a9a9a"/>
<rect x="933.2" y="541.9" width="1.3" height="2.6" fill="#9a9a9a"/>
<rect x="939.4" y="541.9" width="1.3" height="2.6" fill="#9a9a9a"/>
<path d="M861.9 534.4 Q861.9 532.3 864.0 532.3 H868.8 Q870.9 532.3 870.9 534.4 V537.5 L866.4 542.2 L861.9 537.5 Z" fill="#d0d0d0"/>
<rect x="950.8" y="529.9" width="46.7" height="15.8" fill="#2b2b2b" stroke="#7a7a7a" stroke-width="1"/>
<rect x="1000.5" y="530.4" width="9.3" height="14.8" rx="4" fill="#4c4c4c"/>
<path d="M1002.5 535.6 L1005.1 533.2 L1007.7 535.6 M1002.5 540.0 L1005.1 542.4 L1007.7 540.0" fill="none" stroke="#d0d0d0" stroke-width="1.35"/>
<rect x="862.5" y="558.6" width="81.7" height="3.6" rx="1.8" fill="#393939"/>
<rect x="865.8" y="565.5" width="1.3" height="2.6" fill="#9a9a9a"/>
<rect x="875.0" y="565.5" width="1.3" height="2.6" fill="#9a9a9a"/>
<rect x="884.1" y="565.5" width="1.3" height="2.6" fill="#9a9a9a"/>
<rect x="893.4" y="565.5" width="1.3" height="2.6" fill="#9a9a9a"/>
<rect x="902.6" y="565.5" width="1.3" height="2.6" fill="#9a9a9a"/>
<rect x="911.8" y="565.5" width="1.3" height="2.6" fill="#9a9a9a"/>
<rect x="921.0" y="565.5" width="1.3" height="2.6" fill="#9a9a9a"/>
<rect x="930.1" y="565.5" width="1.3" height="2.6" fill="#9a9a9a"/>
<rect x="939.4" y="565.5" width="1.3" height="2.6" fill="#9a9a9a"/>
<path d="M880.3 558.0 Q880.3 555.9 882.4 555.9 H887.2 Q889.3 555.9 889.3 558.0 V561.1 L884.8 565.8 L880.3 561.1 Z" fill="#d0d0d0"/>
<rect x="950.8" y="553.5" width="46.7" height="15.8" fill="#2b2b2b" stroke="#7a7a7a" stroke-width="1"/>
<rect x="1000.5" y="554.0" width="9.3" height="14.8" rx="4" fill="#4c4c4c"/>
<path d="M1002.5 559.2 L1005.1 556.8 L1007.7 559.2 M1002.5 563.6 L1005.1 566.0 L1007.7 563.6" fill="none" stroke="#d0d0d0" stroke-width="1.35"/>
<rect x="862.5" y="582.2" width="81.7" height="3.6" rx="1.8" fill="#393939"/>
<rect x="865.8" y="589.1" width="1.3" height="2.6" fill="#9a9a9a"/>
<rect x="873.1" y="589.1" width="1.3" height="2.6" fill="#9a9a9a"/>
<rect x="880.5" y="589.1" width="1.3" height="2.6" fill="#9a9a9a"/>
<rect x="887.8" y="589.1" width="1.3" height="2.6" fill="#9a9a9a"/>
<rect x="895.2" y="589.1" width="1.3" height="2.6" fill="#9a9a9a"/>
<rect x="902.6" y="589.1" width="1.3" height="2.6" fill="#9a9a9a"/>
<rect x="909.9" y="589.1" width="1.3" height="2.6" fill="#9a9a9a"/>
<rect x="917.3" y="589.1" width="1.3" height="2.6" fill="#9a9a9a"/>
<rect x="924.6" y="589.1" width="1.3" height="2.6" fill="#9a9a9a"/>
<rect x="932.0" y="589.1" width="1.3" height="2.6" fill="#9a9a9a"/>
<rect x="939.4" y="589.1" width="1.3" height="2.6" fill="#9a9a9a"/>
<path d="M898.7 581.6 Q898.7 579.5 900.8 579.5 H905.6 Q907.7 579.5 907.7 581.6 V584.7 L903.2 589.4 L898.7 584.7 Z" fill="#d0d0d0"/>
<rect x="950.8" y="577.1" width="46.7" height="15.8" fill="#2b2b2b" stroke="#7a7a7a" stroke-width="1"/>
<rect x="1000.5" y="577.6" width="9.3" height="14.8" rx="4" fill="#4c4c4c"/>
<path d="M1002.5 582.8 L1005.1 580.4 L1007.7 582.8 M1002.5 587.2 L1005.1 589.6 L1007.7 587.2" fill="none" stroke="#d0d0d0" stroke-width="1.35"/>
<rect x="862.9" y="600.7" width="147.1" height="13.8" rx="3.5" fill="#5a5a5a"/>
<rect x="788" y="624.9" width="229" height="1" fill="#2d2d2d"/>
<rect x="862.5" y="657.6" width="81.7" height="3.6" rx="1.8" fill="#393939"/>
<rect x="865.8" y="664.5" width="1.3" height="2.6" fill="#9a9a9a"/>
<rect x="873.1" y="664.5" width="1.3" height="2.6" fill="#9a9a9a"/>
<rect x="880.5" y="664.5" width="1.3" height="2.6" fill="#9a9a9a"/>
<rect x="887.8" y="664.5" width="1.3" height="2.6" fill="#9a9a9a"/>
<rect x="895.2" y="664.5" width="1.3" height="2.6" fill="#9a9a9a"/>
<rect x="902.6" y="664.5" width="1.3" height="2.6" fill="#9a9a9a"/>
<rect x="909.9" y="664.5" width="1.3" height="2.6" fill="#9a9a9a"/>
<rect x="917.3" y="664.5" width="1.3" height="2.6" fill="#9a9a9a"/>
<rect x="924.6" y="664.5" width="1.3" height="2.6" fill="#9a9a9a"/>
<rect x="932.0" y="664.5" width="1.3" height="2.6" fill="#9a9a9a"/>
<rect x="939.4" y="664.5" width="1.3" height="2.6" fill="#9a9a9a"/>
<path d="M861.9 657.0 Q861.9 654.9 864.0 654.9 H868.8 Q870.9 654.9 870.9 657.0 V660.1 L866.4 664.8 L861.9 660.1 Z" fill="#d0d0d0"/>
<rect x="950.8" y="652.9" width="46.7" height="15.4" fill="#2b2b2b" stroke="#7a7a7a" stroke-width="1"/>
<rect x="1000.5" y="653.2" width="9.3" height="14.8" rx="4" fill="#4c4c4c"/>
<path d="M1002.5 658.4 L1005.1 656.0 L1007.7 658.4 M1002.5 662.8 L1005.1 665.2 L1007.7 662.8" fill="none" stroke="#d0d0d0" stroke-width="1.35"/>
<rect x="862.5" y="681.6" width="81.7" height="3.6" rx="1.8" fill="#393939"/>
<rect x="865.8" y="688.5" width="1.3" height="2.6" fill="#9a9a9a"/>
<rect x="875.0" y="688.5" width="1.3" height="2.6" fill="#9a9a9a"/>
<rect x="884.1" y="688.5" width="1.3" height="2.6" fill="#9a9a9a"/>
<rect x="893.4" y="688.5" width="1.3" height="2.6" fill="#9a9a9a"/>
<rect x="902.6" y="688.5" width="1.3" height="2.6" fill="#9a9a9a"/>
<rect x="911.8" y="688.5" width="1.3" height="2.6" fill="#9a9a9a"/>
<rect x="921.0" y="688.5" width="1.3" height="2.6" fill="#9a9a9a"/>
<rect x="930.1" y="688.5" width="1.3" height="2.6" fill="#9a9a9a"/>
<rect x="939.4" y="688.5" width="1.3" height="2.6" fill="#9a9a9a"/>
<path d="M876.9 681.0 Q876.9 678.9 879.0 678.9 H883.8 Q885.9 678.9 885.9 681.0 V684.1 L881.4 688.8 L876.9 684.1 Z" fill="#d0d0d0"/>
<rect x="950.8" y="676.9" width="46.7" height="15.4" fill="#2b2b2b" stroke="#7a7a7a" stroke-width="1"/>
<rect x="1000.5" y="677.2" width="9.3" height="14.8" rx="4" fill="#4c4c4c"/>
<path d="M1002.5 682.4 L1005.1 680.0 L1007.7 682.4 M1002.5 686.8 L1005.1 689.2 L1007.7 686.8" fill="none" stroke="#d0d0d0" stroke-width="1.35"/>
<rect x="1016.2" y="320.5" width="5.8" height="379" rx="2.9" fill="#5a5a5a"/>
</svg>
<div class="t" style="top:114.2px;font-size:10px;color:#e2e2e2;font-weight:bold;left:801.0px;">Border</div>
<div class="t" style="top:144.5px;font-size:10.2px;color:#d4d4d4;left:802.0px;">Width</div>
<div class="t" style="top:162.2px;font-size:10.5px;color:#dadada;left:805.6px;">3 px</div>
<div class="t" style="top:184.5px;font-size:10.2px;color:#d4d4d4;left:802.0px;">Style</div>
<div class="t" style="top:201.7px;font-size:10.2px;color:#686868;left:806.0px;">N/A</div>
<div class="t" style="top:144.5px;font-size:10.2px;color:#d4d4d4;left:951.0px;">Radius</div>
<div class="t" style="top:184.5px;font-size:10.2px;color:#d4d4d4;left:951.0px;">Padding</div>
<div class="t" style="top:202.1px;font-size:10.5px;color:#dadada;left:953.9px;">0 px</div>
<div class="t" style="top:234.4px;font-size:10px;color:#e2e2e2;font-weight:bold;left:801.0px;">Visibility</div>
<div class="t" style="top:256.8px;font-size:10.2px;color:#d2d2d2;right:167.0px;">Opacity</div>
<div class="t" style="top:256.1px;font-size:10.5px;color:#dadada;left:953.9px;">100%</div>
<div class="t" style="top:280.0px;font-size:10.2px;color:#d4d4d4;right:167.0px;">Display</div>
<div class="t" style="top:280.0px;font-size:10.2px;color:#e0e0e0;left:877.0px;">Visible</div>
<div class="t" style="top:280.0px;font-size:10.2px;color:#e0e0e0;left:932.0px;">Hidden</div>
<div class="t" style="top:311.4px;font-size:10px;color:#e2e2e2;font-weight:bold;left:801.0px;">Shadow</div>
<div class="t" style="top:333.0px;font-size:10.2px;color:#d4d4d4;right:166.6px;">Type</div>
<div class="t" style="top:333.0px;font-size:10.2px;color:#e0e0e0;left:785.5px;width:200px;text-align:center;">Drop</div>
<div class="t" style="top:333.0px;font-size:10.2px;color:#f0f0f0;left:835.3px;width:200px;text-align:center;">Box</div>
<div class="t" style="top:333.0px;font-size:10.2px;color:#e0e0e0;left:885.0px;width:200px;text-align:center;">Inset</div>
<div class="t" style="top:357.2px;font-size:10.2px;color:#d4d4d4;left:754.0px;width:200px;text-align:center;">X</div>
<div class="t" style="top:356.0px;font-size:10.5px;color:#dadada;left:866.6px;">0 px</div>
<div class="t" style="top:380.8px;font-size:10.2px;color:#d4d4d4;left:754.0px;width:200px;text-align:center;">Y</div>
<div class="t" style="top:379.2px;font-size:10.5px;color:#dadada;left:866.6px;">0 px</div>
<div class="t" style="top:356.3px;font-size:10.2px;color:#d4d4d4;right:78.7px;">Blur</div>
<div class="t" style="top:356.0px;font-size:10.5px;color:#dadada;left:953.9px;">0 px</div>
<div class="t" style="top:380.1px;font-size:10.2px;color:#d4d4d4;right:78.7px;">Color</div>
<div class="t" style="top:413.5px;font-size:10px;color:#e2e2e2;font-weight:bold;left:801.0px;">Filter Effects</div>
<div class="t" style="top:438.8px;font-size:10.2px;color:#d4d4d4;left:801.0px;">Apply mode</div>
<div class="t" style="top:438.2px;font-size:10.2px;color:#f0f0f0;left:798.4px;width:200px;text-align:center;">Foreground</div>
<div class="t" style="top:438.2px;font-size:10.2px;color:#e0e0e0;left:873.0px;width:200px;text-align:center;">Backdrop</div>
<div class="t" style="top:461.3px;font-size:10.2px;color:#d2d2d2;right:167.0px;">Blur</div>
<div class="t" style="top:462.7px;font-size:10.5px;color:#dadada;left:953.9px;">0,00 px</div>
<div class="t" style="top:487.4px;font-size:10.2px;color:#d2d2d2;right:167.0px;">Sepia</div>
<div class="t" style="top:486.3px;font-size:10.5px;color:#dadada;left:953.9px;">0%</div>
<div class="t" style="top:511.0px;font-size:10.2px;color:#d2d2d2;right:167.0px;">Saturation</div>
<div class="t" style="top:509.9px;font-size:10.5px;color:#dadada;left:953.9px;">1,0</div>
<div class="t" style="top:534.6px;font-size:10.2px;color:#d2d2d2;right:167.0px;">Hue</div>
<div class="t" style="top:533.5px;font-size:10.5px;color:#dadada;left:953.9px;">0°</div>
<div class="t" style="top:558.2px;font-size:10.2px;color:#d2d2d2;right:167.0px;">Brightness</div>
<div class="t" style="top:557.1px;font-size:10.5px;color:#dadada;left:953.9px;">100%</div>
<div class="t" style="top:581.8px;font-size:10.2px;color:#d2d2d2;right:167.0px;">Contrast</div>
<div class="t" style="top:580.7px;font-size:10.5px;color:#dadada;left:953.9px;">1,0</div>
<div class="t" style="top:603.4px;font-size:10.4px;color:#f4f4f4;left:836.4px;width:200px;text-align:center;">Reset Filters to Default</div>
<div class="t" style="top:634.3px;font-size:10px;color:#e2e2e2;font-weight:bold;left:801.0px;">Reflection</div>
<div class="t" style="top:657.2px;font-size:10.2px;color:#d2d2d2;right:167.0px;">Depth</div>
<div class="t" style="top:656.3px;font-size:10.5px;color:#dadada;left:953.9px;">0%</div>
<div class="t" style="top:681.2px;font-size:10.2px;color:#d2d2d2;right:167.0px;">Offset</div>
<div class="t" style="top:680.3px;font-size:10.5px;color:#dadada;left:953.9px;">8 px</div>
<!-- ===== END INSPECTOR ===== -->
<svg style="left:0;top:0" width="1024" height="703" viewBox="0 0 1024 703">
 <g fill="#4b8757">
  <path d="M0 0 H6 A6 6 0 0 0 0 6 Z"/>
  <path d="M1024 0 H1018 A6 6 0 0 1 1024 6 Z"/>
  <path d="M0 703 V695 A8 8 0 0 0 8 703 Z"/>
  <path d="M1024 703 V695 A8 8 0 0 1 1016 703 Z"/>
 </g>
</svg>
</body></html>
